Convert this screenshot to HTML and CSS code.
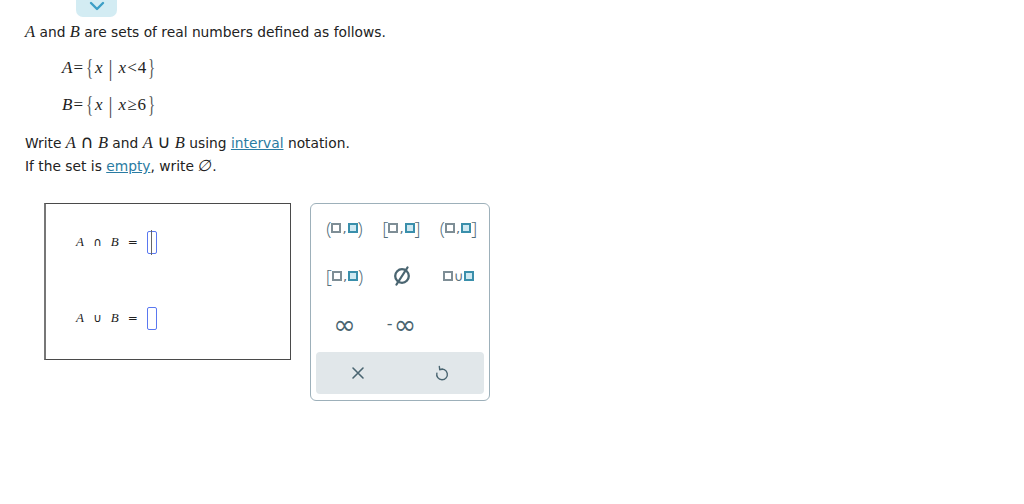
FILE: index.html
```html
<!DOCTYPE html>
<html>
<head>
<meta charset="utf-8">
<link rel="stylesheet" href="styles.css">
</head>
<body>
<div class="page">
  <div class="tabrow">
    <div class="tab">
      <svg width="16" height="10" viewBox="0 0 16 10"><path d="M2 2 L8 8 L14 2" fill="none" stroke="#3d9fc6" stroke-width="2.4" stroke-linecap="round" stroke-linejoin="round"/></svg>
    </div>
  </div>
  <div class="content">
    <p class="intro"><i class="mv">A</i> and <i class="mv">B</i> are sets of real numbers defined as follows.</p>
    <div class="defs">
      <div class="def"><i>A</i><span class="eq">=</span><span class="br">{</span><i>x</i><span class="bar">|</span><i>x</i><span class="op">&lt;</span>4<span class="br">}</span></div>
      <div class="def"><i>B</i><span class="eq">=</span><span class="br">{</span><i>x</i><span class="bar">|</span><i>x</i><span class="op">≥</span>6<span class="br">}</span></div>
    </div>
    <p class="line">Write <i class="mv">A</i> <span class="set">∩</span> <i class="mv">B</i> and <i class="mv">A</i> <span class="set">∪</span> <i class="mv">B</i> using <a class="link">interval</a> notation.</p>
    <p class="line">If the set is <a class="link">empty</a>, write <span class="null">∅</span>.</p>

    <div class="work">
      <div class="answers">
        <div class="ans"><i>A</i><span class="sym">∩</span><i>B</i><span class="sym">=</span><span class="slot active"><span class="caret"></span></span></div>
        <div class="ans"><i>A</i><span class="sym">∪</span><i>B</i><span class="sym">=</span><span class="slot"></span></div>
      </div>
      <div class="palette">
        <div class="keys">
          <div class="key"><span class="p">(</span><span class="sq g"></span><span class="c">,</span><span class="sq b"></span><span class="p">)</span></div>
          <div class="key"><span class="p">[</span><span class="sq g"></span><span class="c">,</span><span class="sq b"></span><span class="p">]</span></div>
          <div class="key"><span class="p">(</span><span class="sq g"></span><span class="c">,</span><span class="sq b"></span><span class="p">]</span></div>
          <div class="key"><span class="p">[</span><span class="sq g"></span><span class="c">,</span><span class="sq b"></span><span class="p">)</span></div>
          <div class="key empty"><svg width="20" height="22" viewBox="0 0 20 22"><circle cx="10" cy="11" r="6.8" fill="none" stroke="#4a6571" stroke-width="2.3"/><path d="M15.5 2.5 L4.5 19.5" stroke="#4a6571" stroke-width="2.3" stroke-linecap="round"/></svg></div>
          <div class="key"><span class="sq g"></span><span class="u">∪</span><span class="sq b"></span></div>
          <div class="key inf">∞</div>
          <div class="key inf"><span class="minus">-</span>∞</div>
          <div class="key blank"></div>
        </div>
        <div class="actions">
          <div class="act"><svg width="14" height="14" viewBox="0 0 14 14"><path d="M2 2 L12 12 M12 2 L2 12" stroke="#4a6571" stroke-width="1.6" stroke-linecap="round"/></svg></div>
          <div class="act"><svg width="16" height="17" viewBox="0 0 24 24"><path d="M4.3 11.4 A8 8 0 1 0 8.6 6.2" fill="none" stroke="#4a6571" stroke-width="2.1" stroke-linecap="round" stroke-linejoin="round"/><path d="M8 1.5 L8.6 6.2 L13.2 5.6" fill="none" stroke="#4a6571" stroke-width="2.1" stroke-linecap="round" stroke-linejoin="round"/></svg></div>
        </div>
      </div>
    </div>
  </div>
</div>
</body>
</html>
```
FILE: styles.css
```css
html, body { margin: 0; padding: 0; background: #fff; }
body { font-family: "DejaVu Sans", Verdana, sans-serif; color: #222; width: 1024px; height: 504px; overflow: hidden; }
.page { position: relative; }
.tabrow { height: 17px; padding-left: 76px; }
.tab { width: 41px; height: 17px; background: #d3ecf3; border-radius: 0 0 7px 7px; display: flex; justify-content: center; align-items: flex-start; padding-top: 1px; box-sizing: border-box; }
.content { padding-left: 25px; }
.intro { margin: 6px 0 0; font-size: 13.8px; line-height: 17px; }
.mv { font-family: "Liberation Serif", "Times New Roman", serif; font-size: 16.5px; }
.set { font-size: 18px; line-height: 1; }
.null { font-family: "DejaVu Sans", sans-serif; font-size: 16px; line-height: 1; display: inline-block; transform: skewX(-12deg); }
.defs { padding-left: 37px; margin-top: 8px; font-family: "Liberation Serif", "Times New Roman", serif; font-size: 17px; color: #222; }
.def { height: 37px; line-height: 24px; display: flex; align-items: center; }
.def .eq { margin: 0 1px; }
.def .br { font-size: 23px; color: #555; transform: scaleX(0.65); display: inline-block; }
.def .bar { margin: 0 6px; font-size: 20px; font-style: normal; color: #444; transform: scaleY(1.15); display: inline-block; }
.def .op { margin: 0 1px; }
.line { margin: 0; font-size: 13.8px; line-height: 23px; }
.defs + .line { margin-top: 8px; }
.link { color: #2a7ba2; text-decoration: underline; }
.work { display: flex; align-items: flex-start; margin-top: 25px; margin-left: 19px; gap: 19px; }
.answers { width: 247px; height: 157px; border: 1px solid #4a4a4a; border-left: 2px solid #777; box-sizing: border-box; padding: 25px 0 0 30px; }
.ans { display: flex; align-items: center; height: 26px; font-family: "Liberation Serif", "Times New Roman", serif; font-size: 13px; color: #222; margin-bottom: 50px; }
.ans .sym { font-family: "DejaVu Sans", sans-serif; font-size: 12px; margin: 0 9px; }
.slot { display: inline-block; width: 8px; height: 21px; border: 1.5px solid #5a78f0; border-radius: 2px; position: relative; }
.caret { position: absolute; left: 3px; top: -2px; width: 1.5px; height: 25px; background: #666; }
.palette { width: 180px; height: 198px; border: 1px solid #9db0ba; border-radius: 6px; box-sizing: border-box; padding: 0 5px 5px; display: flex; flex-direction: column; }
.keys { display: grid; grid-template-columns: 57px 57px 57px; grid-auto-rows: 48px; }
.key { display: flex; align-items: center; justify-content: center; color: #4a6571; font-size: 17px; font-family: "DejaVu Sans", sans-serif; }
.key .p { font-size: 19px; color: #546e7a; font-family: "Open Sans", sans-serif; font-weight: 300; line-height: 1; }
.key .c { font-size: 13px; margin: 0 1px; color: #546e7a; }
.sq { display: inline-block; width: 10px; height: 10px; box-sizing: border-box; }
.sq.g { border: 2px solid #7e8e96; background: #fff; }
.sq.b { border: 2px solid #3a8fab; background: #cfe9f2; }
.u { font-size: 13px; margin: 0 1px; color: #546e7a; }
.inf { font-size: 27px; line-height: 1; }
.minus { font-size: 16px; margin-right: 1px; }
.actions { margin-top: 4px; height: 42px; background: #e1e7ea; border-radius: 4px; display: flex; }
.act { flex: 1; display: flex; align-items: center; justify-content: center; }
```
